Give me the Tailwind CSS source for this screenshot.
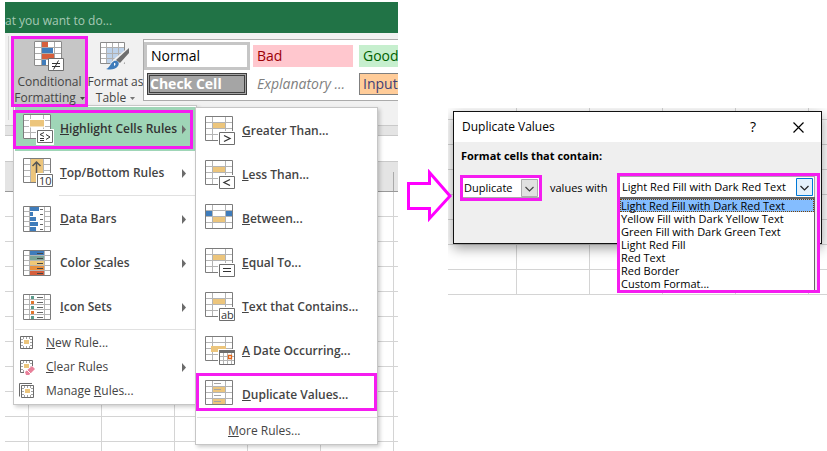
<!DOCTYPE html>
<html lang="en">
<head>
<meta charset="utf-8">
<title>Duplicate Values</title>
<script src="https://cdn.jsdelivr.net/npm/@tailwindcss/browser@4"></script>
</head>
<body class="bg-white font-['Open_Sans','Noto_Sans',sans-serif] text-xs text-[#444]">
<svg class="hidden" aria-hidden="true">
  <defs>
    <symbol id="grid" viewBox="0 0 31 31">
      <path fill="#fff" d="M0 0h28v25H0z"/>
      <path fill="none" stroke="#b4b4b4" d="M7.500 1v23M20.500 1v23M1 6.500h26M1 12.500h26M1 18.500h26"/>
      <path fill="none" stroke="#7c7c7c" d="M.5.5h27v24H.5z"/>
    </symbol>
    <symbol id="cell" viewBox="0 0 31 31">
      <use href="#grid" width="31" height="31"/>
      <path fill="#ecc57c" d="M8 7h12v5H8z"/>
    </symbol>
    <symbol id="badge" viewBox="0 0 31 31">
      <path fill="#fff" d="M13 15h18v16H13z"/>
      <path fill="#fff" stroke="#6e6e6e" d="M14.500 16.500h15v12h-15z"/>
    </symbol>
    <symbol id="arrow" viewBox="0 0 4 9"><path fill="#6b6b6b" d="M0 0l4 4.500L0 9z"/></symbol>
    <symbol id="rule" viewBox="0 0 16 16">
      <path fill="#fff" stroke="#6b6b6b" d="M.5 1.500h12v12H.5z"/>
      <path stroke="#a5a5a5" d="M3.500 2v11M6.500 2v11M9.500 2v11M1 4.500h11M1 7.500h11M1 10.500h11"/>
      <path fill="#fff" d="M3 4h7v7H3z"/>
      <path fill="#ecc57c" d="M4 5h5v4H4z"/>
    </symbol>
  </defs>
</svg>

<main class="grid min-h-screen grid-cols-[minmax(0,393fr)_minmax(0,50fr)_minmax(0,379fr)] pt-0.5 pl-[5px]">

  <section class="relative flex flex-col overflow-hidden" aria-label="Workbook">
    <header class="flex h-[31px] items-end bg-[#217346] pb-1 text-[#a6c9b5]">at you want to do...</header>

    <div class="flex h-[92px] items-start bg-[#f1f1f1] pt-[3px]">
      <span class="ml-[3px] h-[84px] w-px bg-[#d5d5d5]"></span>
      <div class="relative ml-0.5">
        <button class="relative z-30 flex h-[71px] w-[77px] flex-col items-center border-[3px] border-[#f51cf0] bg-[#c6c6c6] pt-0.5 leading-4">
          <svg class="mb-0.5 h-[31px] w-[31px] shrink-0" viewBox="0 0 31 31">
            <path fill="#fff" d="M0 0h28v25H0z"/>
            <path fill="#d65f3c" d="M8 1h6v5H8zM8 13h12v5H8z"/>
            <path fill="#3f7cbb" d="M8 7h11v5H8zM8 19h4v5H8z"/>
            <path fill="none" stroke="#a9a9a9" d="M7.500 0v25M20.500 0v25M0 6.500h28M0 12.500h28M0 18.500h28"/>
            <path fill="none" stroke="#8a8a8a" d="M.5.5h27v24H.5z"/>
            <path fill="#fff" stroke="#6e6e6e" d="M14.500 17.500h15v12h-15z"/>
            <path fill="none" stroke="#333" d="M18 22.500h8M18 25.500h8M24.500 19.500l-5 9"/>
          </svg>
          <span>Conditional</span>
          <span class="flex items-center gap-1 whitespace-nowrap">Formatting <svg class="h-[3px] w-[5px]" viewBox="0 0 5 3"><path fill="#444" d="M0 0h5L2.500 3z"/></svg></span>
        </button>

        <div role="menu" class="absolute top-[69px] left-0.5 z-20 w-[184px] border border-[#c6c6c6] bg-white py-px pl-px font-semibold shadow-[2px_2px_4px_#0003]">
          <button role="menuitem" class="relative flex h-11 w-full items-center bg-[#9fd5b7] pl-2 text-[#333]">
            <svg class="h-[31px] w-[31px]" viewBox="0 0 31 31"><use href="#grid" width="31" height="31"/><path fill="#ecc57c" stroke="#fff" d="M6.500 5.500h15v7.500h-15z"/><use href="#badge" width="31" height="31"/><path fill="none" stroke="#333" d="M21 18.500l-4 2 4 2M17 24.500h4M17 26.500h4M23 20.500l4 2.500-4 2.500"/></svg>
            <span class="ml-1.5"><u>H</u>ighlight Cells Rules</span>
            <svg class="mr-2.5 ml-auto h-[9px] w-1"><use href="#arrow"/></svg>
            <span class="pointer-events-none absolute top-[3px] -left-0.5 h-[39px] w-[180px] border-[3px] border-[#f51cf0]"></span>
          </button>
          <button role="menuitem" class="flex h-11 w-full items-center pl-2">
            <svg class="h-[31px] w-[31px]" viewBox="0 0 31 31"><use href="#grid" width="31" height="31"/><path fill="#ecc57c" d="M8 1h12v23H8z"/><path fill="none" stroke="#555" stroke-width="1.500" d="M13.500 15V4M9.500 8l4-4 4 4"/><use href="#badge" width="31" height="31"/><text x="16" y="27" font-size="11" font-weight="400" fill="#333">10</text></svg>
            <span class="ml-1.5"><u>T</u>op/Bottom Rules</span>
            <svg class="mr-2.5 ml-auto h-[9px] w-1"><use href="#arrow"/></svg>
          </button>
          <div class="ml-11 h-0.5 border-t border-[#e1e1e1]"></div>
          <button role="menuitem" class="flex h-11 w-full items-center pl-2">
            <svg class="h-[26px] w-[31px]" viewBox="0 0 31 26"><path fill="#fff" d="M0 0h28v26H0z"/><path stroke="#b4b4b4" d="M6.500 0v26M21.500 0v26M0 5.500h28M0 10.500h28M0 15.500h28M0 20.500h28"/><path fill="#fff" d="M7 1h14v24H7z"/><path fill="#3f7cbb" d="M7 1h9v4H7zM7 6h3v4H7zM7 11h6v4H7zM7 16h8v4H7zM7 21h6v4H7z"/><path stroke="#666" d="M17 3.500h3M17 8.500h3M17 13.500h3M17 18.500h3M17 23.500h3"/><path fill="none" stroke="#7c7c7c" d="M.5.5h27v25H.5z"/></svg>
            <span class="ml-1.5"><u>D</u>ata Bars</span>
            <svg class="mr-2.5 ml-auto h-[9px] w-1"><use href="#arrow"/></svg>
          </button>
          <button role="menuitem" class="flex h-11 w-full items-center pl-2">
            <svg class="h-[26px] w-[31px]" viewBox="0 0 31 26"><path fill="#fff" d="M0 0h28v26H0z"/><path fill="#3f7cbb" d="M7 1h14v4H7z"/><path fill="#7ba596" d="M7 6h14v4H7z"/><path fill="#f0c878" d="M7 11h14v4H7z"/><path fill="#e8903f" d="M7 16h14v4H7z"/><path fill="#d65f3c" d="M7 21h14v4H7z"/><path stroke="#b4b4b4" d="M6.500 0v26M21.500 0v26M0 5.500h28M0 10.500h28M0 15.500h28M0 20.500h28"/><path stroke="#444" d="M14 3.500h6M14 8.500h6M14 13.500h6M14 18.500h6M14 23.500h6"/><path fill="none" stroke="#7c7c7c" d="M.5.5h27v25H.5z"/></svg>
            <span class="ml-1.5">Color <u>S</u>cales</span>
            <svg class="mr-2.5 ml-auto h-[9px] w-1"><use href="#arrow"/></svg>
          </button>
          <button role="menuitem" class="flex h-11 w-full items-center pl-2">
            <svg class="h-[26px] w-[31px]" viewBox="0 0 31 26"><path fill="#fff" d="M0 0h28v26H0z"/><path stroke="#b4b4b4" d="M6.500 0v26M21.500 0v26M0 5.500h28M0 10.500h28M0 15.500h28M0 20.500h28"/><path fill="#5c9c8c" d="M8 2h3v3H8zM8 12h3v3H8zM8 22h3v3H8z"/><path fill="#e2762f" d="M8 7h3v3H8zM8 17h3v3H8z"/><path stroke="#666" d="M14 3.500h6M14 8.500h6M14 13.500h6M14 18.500h6M14 23.500h6"/><path fill="none" stroke="#7c7c7c" d="M.5.5h27v25H.5z"/></svg>
            <span class="ml-1.5"><u>I</u>con Sets</span>
            <svg class="mr-2.5 ml-auto h-[9px] w-1"><use href="#arrow"/></svg>
          </button>
          <div class="h-0.5 border-t border-[#e1e1e1]"></div>
          <button role="menuitem" class="flex h-6 w-full items-center pl-[5px] font-normal">
            <svg class="h-4 w-4" viewBox="0 0 16 16"><use href="#rule" width="16" height="16"/></svg>
            <span class="ml-2.5"><u>N</u>ew Rule...</span>
          </button>
          <button role="menuitem" class="flex h-6 w-full items-center pl-[5px] font-normal">
            <svg class="h-4 w-4" viewBox="0 0 16 16"><use href="#rule" width="16" height="16"/><path fill="#fff" d="M4 13l7-6h5v9H4z"/><path fill="#e8819a" d="M5 13l7-6 3 3-6 6H6z"/><path stroke="#fff" d="M7 11l4 4"/></svg>
            <span class="ml-2.5"><u>C</u>lear Rules</span>
            <svg class="mr-2.5 ml-auto h-[9px] w-1"><use href="#arrow"/></svg>
          </button>
          <button role="menuitem" class="flex h-6 w-full items-center pl-1 font-normal">
            <svg class="h-4 w-4" viewBox="0 0 16 16"><path fill="none" stroke="#6b6b6b" d="M.5 13.500V.5H13"/><use href="#rule" x="2" y="1" width="16" height="16"/></svg>
            <span class="ml-[11px]">Manage <u>R</u>ules...</span>
          </button>

          <div role="menu" class="absolute top-px left-[181px] w-[183px] border border-[#c6c6c6] bg-white py-px pl-px shadow-[2px_2px_4px_#0003]">
            <button role="menuitem" class="flex h-11 w-full items-center pl-2">
              <svg class="h-[31px] w-[31px]" viewBox="0 0 31 31"><use href="#cell" width="31" height="31"/><use href="#badge" width="31" height="31"/><path fill="none" stroke="#333" stroke-width="1.300" d="M19 19.500l6 3-6 3"/></svg>
              <span class="ml-1.5"><u>G</u>reater Than...</span>
            </button>
            <button role="menuitem" class="flex h-11 w-full items-center pl-2">
              <svg class="h-[31px] w-[31px]" viewBox="0 0 31 31"><use href="#cell" width="31" height="31"/><use href="#badge" width="31" height="31"/><path fill="none" stroke="#333" stroke-width="1.300" d="M25 19.500l-6 3 6 3"/></svg>
              <span class="ml-1.5"><u>L</u>ess Than...</span>
            </button>
            <button role="menuitem" class="flex h-11 w-full items-center pl-2">
              <svg class="h-[31px] w-[31px]" viewBox="0 0 31 31"><use href="#grid" width="31" height="31"/><path fill="#3f7cbb" d="M1 7h6v5H1zM21 7h6v5h-6z"/><path fill="#fff" d="M8 7h12v5H8z"/><path fill="#ecc57c" d="M8 13h12v5H8z"/></svg>
              <span class="ml-1.5"><u>B</u>etween...</span>
            </button>
            <button role="menuitem" class="flex h-11 w-full items-center pl-2">
              <svg class="h-[31px] w-[31px]" viewBox="0 0 31 31"><use href="#cell" width="31" height="31"/><use href="#badge" width="31" height="31"/><path stroke="#333" d="M18 20.500h8M18 23.500h8"/></svg>
              <span class="ml-1.5"><u>E</u>qual To...</span>
            </button>
            <button role="menuitem" class="flex h-11 w-full items-center pl-2">
              <svg class="h-[31px] w-[31px]" viewBox="0 0 31 31"><use href="#cell" width="31" height="31"/><use href="#badge" width="31" height="31"/><text x="16" y="27" font-size="11" font-weight="400" fill="#333">ab</text></svg>
              <span class="ml-1.5"><u>T</u>ext that Contains...</span>
            </button>
            <button role="menuitem" class="flex h-11 w-full items-center pl-2">
              <svg class="h-[31px] w-[31px]" viewBox="0 0 31 31"><use href="#grid" width="31" height="31"/><path fill="#ecc57c" d="M6 10h15v6H6z"/><path fill="#fff" d="M13 13h18v18H13z"/><path fill="#fff" stroke="#6e6e6e" d="M14.500 14.500h15v14h-15z"/><path fill="#6e6e6e" d="M14 14h16v3H14z"/><path stroke="#b4b4b4" d="M18.500 17v11M22.500 17v11M26.500 17v11M15 20.500h14M15 24.500h14"/><path fill="#fff" stroke="#e2661a" stroke-width="1.300" d="M23.500 19.500h3v3h-3z"/></svg>
              <span class="ml-1.5"><u>A</u> Date Occurring...</span>
            </button>
            <button role="menuitem" class="relative flex h-11 w-full items-center pl-2">
              <svg class="h-[31px] w-[31px]" viewBox="0 0 31 31"><use href="#grid" width="31" height="31"/><path fill="#ecc57c" d="M8 7h12v5H8zM8 19h12v5H8z"/><path stroke="#a5a5a5" d="M9 3.500h7M9 9.500h7M9 15.500h7M9 21.500h7"/></svg>
              <span class="ml-1.5"><u>D</u>uplicate Values...</span>
              <span class="pointer-events-none absolute top-0 -left-px h-[38px] w-[181px] border-[3px] border-[#f51cf0]"></span>
            </button>
            <div class="h-0.5 border-t border-[#e1e1e1]"></div>
            <button role="menuitem" class="flex h-6 w-full items-center pl-[31px] font-normal"><span><u>M</u>ore Rules...</span></button>
          </div>
        </div>
      </div>

      <button class="flex w-[55px] flex-col items-center pt-[5px] leading-4">
        <svg class="mb-0.5 h-[31px] w-[31px] shrink-0" viewBox="0 0 31 31">
          <path fill="#fff" d="M0 1h25v22H0z"/><path fill="#bdd2ea" d="M7 7h17v15H7z"/>
          <path fill="none" stroke="#b0b0b0" d="M6.500 2v20M12.500 2v20M18.500 2v20M0 6.500h25M0 12.500h25M0 17.500h25"/>
          <path fill="none" stroke="#8a8a8a" d="M.5 1.500h24v21H.5z"/>
          <path fill="#f1f1f1" d="M30 5L14 18l-9 11h15l11-18z"/>
          <path fill="#6e6e6e" d="M29 7v5l-9 10-4-3z"/>
          <path fill="#3f7cbb" d="M14 20c4-1 6 2 4 5-3 4-8 4-12 3 4-1 4-6 8-8z"/><path fill="#fff" d="M14 22c2 0 2 2 0 3z"/>
        </svg>
        <span class="whitespace-nowrap">Format as</span>
        <span class="flex items-center gap-1">Table <svg class="h-[3px] w-[5px]" viewBox="0 0 5 3"><path fill="#777" d="M0 0h5L2.500 3z"/></svg></span>
      </button>

      <div class="mt-[3px] grid h-[62px] flex-1 grid-cols-[100px_100px_100px] grid-rows-[22px_22px] gap-x-1.5 gap-y-1.5 overflow-hidden border border-r-0 border-[#ababab] bg-white pt-[5px] pl-[3px] text-sm">
        <button class="bg-white pl-1 text-left text-black outline-[3px] outline-[#c6c6c6]">Normal</button>
        <button class="bg-[#ffc7ce] pl-1 text-left text-[#9c0006]">Bad</button>
        <button class="bg-[#c6efce] pl-1 text-left text-[#006100]">Good</button>
        <button class="flex items-center border-[3px] border-double border-[#3f3f3f] bg-[#a5a5a5] text-left font-bold text-white">Check Cell</button>
        <button class="pl-1 text-left text-[#7f7f7f] italic">Explanatory ...</button>
        <button class="flex items-center border border-[#7f7f7f] bg-[#ffcc99] pl-[3px] text-left text-[#3f3f76]">Input</button>
      </div>
    </div>

    <div class="h-[11px] border-y border-[#c9c9c9] bg-[#e4e4e4]"></div>
    <div class="h-[25px] bg-white"></div>
    <div class="flex h-[31px] justify-end border-t border-b border-t-[#c9c9c9] border-b-[#999] bg-[#e4e4e4] pt-2.5"><span class="mr-1 w-px bg-[#aaa]"></span></div>
    <div class="flex-1 bg-[linear-gradient(90deg,#d4d4d4_1px,transparent_1px),linear-gradient(#d4d4d4_1px,transparent_1px)] bg-size-[73px_25px] bg-position-[23px_24px]"></div>
  </section>

  <div class="relative z-10 mt-[167px] ml-[9px]">
    <svg class="h-[54px] w-[46px] max-w-none" viewBox="0 0 46 54" role="img" aria-label="Leads to"><path fill="#fff" stroke="#f0f" stroke-width="3" d="M1.500 14.500H22.500V3.500L43 27 22.500 49.500V39.500H1.500z"/></svg>
  </div>

  <section class="mt-[106px] self-start overflow-hidden bg-[linear-gradient(90deg,#d4d4d4_1px,transparent_1px),linear-gradient(#d4d4d4_1px,transparent_1px)] bg-size-[73px_25px] bg-position-[68px_11px] px-[5px] pt-[3px] pb-[51px]" aria-label="Result">
    <div role="dialog" aria-labelledby="dlg" class="flex h-[133px] flex-col border border-[#111] bg-[#efefef] text-black shadow-[0_4px_12px_#0006]">
      <div class="flex h-[30px] shrink-0 items-center bg-white pl-2">
        <h1 id="dlg">Duplicate Values</h1>
        <button class="ml-auto w-4 text-center text-sm" aria-label="Help">?</button>
        <button class="mr-[17px] ml-8" aria-label="Close"><svg class="h-[11px] w-[11px]" viewBox="0 0 11 11"><path fill="none" stroke="#000" stroke-width="1.200" d="M.5.5l10 10M10.500.5l-10 10"/></svg></button>
      </div>
      <div class="pt-1.5 pl-[7px] text-[11px] leading-4 font-bold">Format cells that contain:</div>
      <div class="mt-[9px] flex items-start pr-px pl-1.5 text-[11px]">
        <div class="relative mt-0.5 h-[26px] w-[82px] border-[3px] border-[#f51cf0] bg-white">
          <select id="kind" aria-label="Duplicate or unique" class="block h-5 w-full appearance-none border-b border-[#aaa] pl-px leading-4"><option>Duplicate</option><option>Unique</option></select>
          <svg class="pointer-events-none absolute top-px right-px h-[18px] w-[17px]" viewBox="0 0 17 18"><path fill="#e1e1e1" stroke="#adadad" d="M.5.5h16v17H.5z"/><path fill="none" stroke="#444" stroke-width="1.200" d="M4.500 8l4 4 4-4"/></svg>
        </div>
        <label for="fmt" class="ml-2 leading-[30px] whitespace-nowrap">values with</label>
        <div class="relative ml-auto h-[30px] w-[203px]">
          <div class="absolute inset-x-0 top-0 border-[3px] border-[#f51cf0] bg-[#efefef]">
            <div class="relative mr-0.5 border-t border-r border-[#aaa] bg-white">
              <select id="fmt" class="block h-5 w-full appearance-none pl-0.5 leading-4"><option>Light Red Fill with Dark Red Text</option></select>
              <svg class="pointer-events-none absolute top-px right-px h-[18px] w-[17px]" viewBox="0 0 17 18"><path fill="#e5f1fb" stroke="#0078d7" d="M.5.5h16v17H.5z"/><path fill="none" stroke="#222" stroke-width="1.200" d="M4.500 8l4 4 4-4"/></svg>
            </div>
            <ul role="listbox" aria-label="Format" class="mr-0.5 border-t-2 border-r border-[#646464] bg-white leading-[13px]">
              <li role="option" aria-selected="true" class="bg-[#84bdff] pl-px outline outline-dotted -outline-offset-1 outline-[#7a4200]">Light Red Fill with Dark Red Text</li>
              <li role="option" class="pl-px">Yellow Fill with Dark Yellow Text</li>
              <li role="option" class="pl-px">Green Fill with Dark Green Text</li>
              <li role="option" class="pl-px">Light Red Fill</li>
              <li role="option" class="pl-px">Red Text</li>
              <li role="option" class="pl-px">Red Border</li>
              <li role="option" class="pl-px">Custom Format...</li>
            </ul>
          </div>
        </div>
      </div>
    </div>
  </section>
</main>
</body>
</html>
